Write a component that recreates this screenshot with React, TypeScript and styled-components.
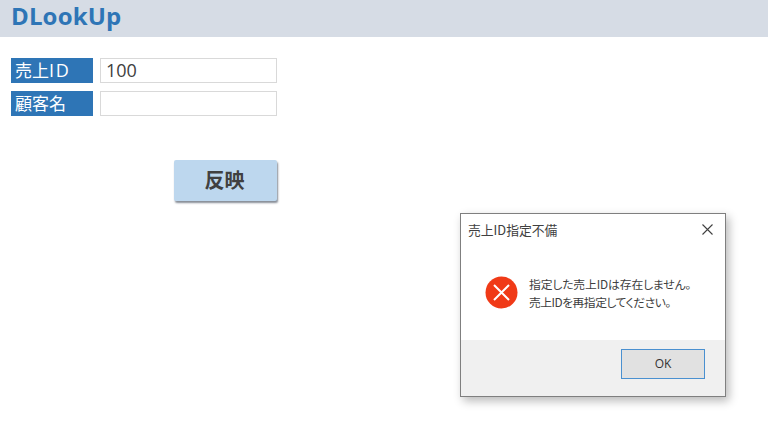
import React from "react";
import styled, { createGlobalStyle } from "styled-components";

const Global = createGlobalStyle`
  html, body { margin: 0; padding: 0; background: #fff; }
  body { width: 768px; height: 443px; overflow: hidden; font-family: "Noto Sans CJK JP", "Open Sans", sans-serif; }
`;
const Page = styled.div`
  position: relative;
  width: 768px;
  height: 443px;
  background: #fff;
  overflow: hidden;
`;
const Header = styled.header`
  height: 37px;
  background: #d6dce5;
  display: flex;
  align-items: center;
  padding-left: 11px;
  box-sizing: border-box;
`;
const Title = styled.h1`
  margin: 0 0 5px;
  font: 700 24px/32px "Open Sans", "Liberation Sans", sans-serif;
  letter-spacing: 0.15px;
  color: #2e75b6;
`;
const Form = styled.div`
  width: 267px;
  margin: 21px 0 0 11px;
  display: flex;
  flex-direction: column;
  gap: 8px;
`;
const Row = styled.div`
  display: flex;
  gap: 7px;
  height: 25px;
`;
const Label = styled.div`
  width: 82px;
  background: #2e75b6;
  color: #fff;
  font: 400 17px/24px "Noto Sans CJK JP", sans-serif;
  padding-left: 4px;
  box-sizing: border-box;
`;
const Latin = styled.span`
  font-family: "Open Sans", sans-serif;
  font-size: 18px;
  letter-spacing: 1.8px;
`;
const Field = styled.div`
  width: 177px;
  box-sizing: border-box;
  border: 1px solid #d9d9d9;
  background: #fff;
  color: #404040;
  font: 400 18px/23px "Open Sans", "Liberation Sans", sans-serif;
  padding-left: 5px;
`;
const ApplyRow = styled.div`
  display: flex;
  justify-content: flex-end;
  margin-top: 36px;
  padding-right: 1px;
`;
const ApplyButton = styled.button`
  width: 103px;
  height: 41px;
  border: 0;
  border-radius: 2px;
  background: #bdd7ee;
  box-shadow: 1px 2px 2px rgba(70, 80, 95, 0.65);
  color: #404040;
  font: 700 20px/39px "Noto Sans CJK JP", sans-serif;
  padding: 0 2px 2px 0;
`;
const Dialog = styled.div`
  position: absolute;
  left: 460px;
  top: 213px;
  width: 266px;
  height: 184px;
  box-sizing: border-box;
  border: 1px solid #7f7f7f;
  background: #fff;
  box-shadow: 3px 4px 9px rgba(0, 0, 0, 0.28);
  display: flex;
  flex-direction: column;
`;
const DialogBar = styled.div`
  height: 31px;
  display: flex;
  align-items: center;
  justify-content: space-between;
  padding: 0 12px 0 7px;
  color: #404040;
  font: 400 12.8px/30px "Noto Sans CJK JP", sans-serif;
`;
const Message = styled.div`
  flex: 1;
  display: flex;
  align-items: flex-start;
  gap: 11px;
  padding: 31px 0 0 24px;
`;
const MessageText = styled.div`
  margin-top: -1px;
  color: #404040;
`;
const MessageLine = styled.p<{ $tracking: number }>`
  margin: 0;
  font: 400 11.8px/18px "Noto Sans CJK JP", sans-serif;
  font-feature-settings: "palt";
  letter-spacing: ${(p) => p.$tracking}px;
`;
const Footer = styled.div`
  height: 56px;
  background: #f0f0f0;
  display: flex;
  justify-content: flex-end;
  padding: 9px 20px 0 0;
  box-sizing: border-box;
`;
const OkButton = styled.button`
  width: 84px;
  height: 30px;
  box-sizing: border-box;
  border: 1px solid #4a90d0;
  background: #e1e1e1;
  color: #333;
  font: 400 12px/28px "Open Sans", "Liberation Sans", sans-serif;
  padding: 0;
`;

export default function App() {
  return (
    <Page>
      <Global />
      <Header>
        <Title>DLookUp</Title>
      </Header>
      <Form>
        <Row>
          <Label>
            売上<Latin>ID</Latin>
          </Label>
          <Field>100</Field>
        </Row>
        <Row>
          <Label>顧客名</Label>
          <Field />
        </Row>
        <ApplyRow>
          <ApplyButton>反映</ApplyButton>
        </ApplyRow>
      </Form>
      <Dialog>
        <DialogBar>
          <span>売上ID指定不備</span>
          <svg width="11" height="11" viewBox="0 0 11 11" aria-hidden="true">
            <path d="M0.5 0.5L10.5 10.5M10.5 0.5L0.5 10.5" stroke="#404040" strokeWidth="1.1" fill="none" />
          </svg>
        </DialogBar>
        <Message>
          <svg width="33" height="33" viewBox="0 0 33 33" aria-hidden="true">
            <circle cx="16.5" cy="16.5" r="16" fill="#f03a17" />
            <path d="M9 9L24 24M24 9L9 24" stroke="#fff" strokeWidth="2" fill="none" />
          </svg>
          <MessageText>
            <MessageLine $tracking={-0.12}>指定した売上IDは存在しません。</MessageLine>
            <MessageLine $tracking={-0.5}>売上IDを再指定してください。</MessageLine>
          </MessageText>
        </Message>
        <Footer>
          <OkButton>OK</OkButton>
        </Footer>
      </Dialog>
    </Page>
  );
}
